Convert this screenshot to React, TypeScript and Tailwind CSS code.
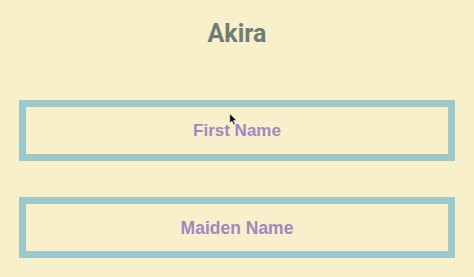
import React from "react";

export default function App() {
  return (
    <div className="relative w-[474px] h-[277px] bg-[#f7f0ca] overflow-hidden" style={{ fontFamily: "'Liberation Sans', Arial, sans-serif" }}>
      <div className="pt-[19px] text-center font-bold text-[25px] leading-[29px] text-[#717b77]" style={{ fontFamily: "Roboto, sans-serif" }}>
        Akira
      </div>
      <div className="flex flex-col gap-[36px] px-[19px] mt-[52px]">
        <div className="h-[61px] border-[7px] border-[#9ccacc] flex items-center justify-center">
          <span className="font-bold text-[17px] leading-[20px] text-[#a586c1]">First Name</span>
        </div>
        <div className="h-[61px] border-[7px] border-[#9ccacc] flex items-center justify-center">
          <span className="font-bold text-[17.5px] leading-[20px] text-[#a586c1]">Maiden Name</span>
        </div>
      </div>
      <svg className="absolute left-[229px] top-[113px]" width="9" height="13" viewBox="0 0 8 12">
        <path d="M0.5 0.5 L0.5 9.5 L2.6 7.5 L4.2 11 L5.6 10.4 L4.1 7 L7 7 Z" fill="#111" stroke="#fff" strokeWidth="0.6" />
      </svg>
    </div>
  );
}
